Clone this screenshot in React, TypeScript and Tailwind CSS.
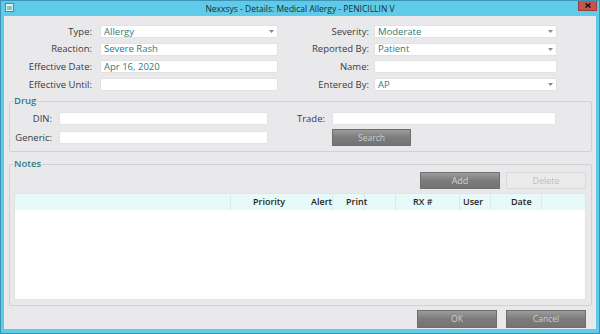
import React from "react";

const font = { fontFamily: '"Open Sans", "Noto Sans", sans-serif' };

function Arrow() {
  return (
    <svg width="5" height="3" viewBox="0 0 5 3" className="shrink-0">
      <path d="M0 0 L5 0 L2.5 3 Z" fill="#8a8a8a" />
    </svg>
  );
}

function Field({ value, dropdown, w }: { value?: string; dropdown?: boolean; w: string }) {
  return (
    <div
      className={`${w} h-[13px] bg-white rounded-[2px] border border-[#e2e2e2] flex items-center pl-[3px] pr-[3px] text-[9.5px] leading-[12px] text-[#2f7b79]`}
    >
      <span className="flex-1 whitespace-nowrap">{value}</span>
      {dropdown && <Arrow />}
    </div>
  );
}

function Label({ children, w }: { children: React.ReactNode; w: string }) {
  return (
    <div className={`${w} shrink-0 text-right text-[9.5px] leading-[12px] whitespace-nowrap text-[#3b3b3b]`}>
      {children}
    </div>
  );
}

function GrayButton({ children, w, h = "h-[17px]" }: { children: React.ReactNode; w: string; h?: string }) {
  return (
    <div
      className={`${w} ${h} flex items-center justify-center border border-[#6e6e6e] bg-gradient-to-b from-[#9c9c9c] via-[#7c7c7c] to-[#747474] text-[8.5px] text-[#cfcfcf] leading-[12px]`}
    >
      <span>{children}</span>
    </div>
  );
}

export default function App() {
  return (
    <div
      className="w-[600px] h-[334px] bg-[#5fcbe9] border border-[#3c95b4] flex flex-col overflow-hidden"
      style={font}
    >
      {/* Title bar */}
      <div className="h-[15px] relative flex items-center justify-center shrink-0">
        <div className="absolute left-[4px] top-[2px] w-[9px] h-[9px] border border-[#3f8f98] bg-[#dff2f2] flex items-center justify-center">
          <div className="w-[5px] h-[4px] bg-[#8fc0c6]" />
        </div>
        <span className="text-[8.5px] text-[#1c2a30] leading-[12px]">
          Nexxsys - Details: Medical Allergy - PENICILLIN V
        </span>
        <div className="absolute right-[2px] top-[-1px] w-[19px] h-[11px] bg-[#c9534c] border border-[#9a3c37] flex items-center justify-center">
          <svg width="6" height="5" viewBox="0 0 6 5">
            <path d="M0.5 0.5 L5.5 4.5 M5.5 0.5 L0.5 4.5" stroke="#111" strokeWidth="1.4" />
          </svg>
        </div>
      </div>

      {/* Content */}
      <div className="flex-1 mx-[3px] mb-[4px] bg-[#e9e9eb] flex flex-col">
        {/* Top form */}
        <div className="flex pt-[9px]">
          <div className="flex flex-col gap-[4.7px]">
            {[
              ["Type:", "Allergy", true],
              ["Reaction:", "Severe Rash", false],
              ["Effective Date:", "Apr 16, 2020", false],
              ["Effective Until:", "", false],
            ].map(([l, v, d]) => (
              <div key={l as string} className="flex items-center gap-[8px]">
                <Label w="w-[88px]">{l as string}</Label>
                <Field w="w-[178px]" value={v as string} dropdown={d as boolean} />
              </div>
            ))}
          </div>
          <div className="flex flex-col gap-[4.7px]">
            {[
              ["Severity:", "Moderate", true],
              ["Reported By:", "Patient", true],
              ["Name:", "", false],
              ["Entered By:", "AP", true],
            ].map(([l, v, d]) => (
              <div key={l as string} className="flex items-center gap-[5px]">
                <Label w="w-[91px]">{l as string}</Label>
                <Field w="w-[183px]" value={v as string} dropdown={d as boolean} />
              </div>
            ))}
          </div>
        </div>

        {/* Drug */}
        <fieldset className="mt-[4px] ml-[5px] w-[583px] border border-[#d2d2d4] rounded-[2px] pb-[5px]">
          <legend className="ml-[3px] px-[1px] text-[9.5px] leading-[12px] font-semibold text-[#2f7d86]">Drug</legend>
          <div className="flex pt-[5px]">
            <div className="flex flex-col gap-[6px]">
              <div className="flex items-center gap-[7px]">
                <Label w="w-[42px]">DIN:</Label>
                <Field w="w-[209px]" />
              </div>
              <div className="flex items-center gap-[7px]">
                <Label w="w-[42px]">Generic:</Label>
                <Field w="w-[209px]" />
              </div>
            </div>
            <div className="flex items-start gap-[7px]">
              <div className="h-[13px] flex items-center">
                <Label w="w-[57px]">Trade:</Label>
              </div>
              <div className="flex flex-col gap-[4px]">
                <Field w="w-[224px]" />
                <GrayButton w="w-[79px]">Search</GrayButton>
              </div>
            </div>
          </div>
        </fieldset>

        {/* Notes */}
        <fieldset className="mt-[6px] ml-[5px] w-[583px] h-[148px] border border-[#d2d2d4] rounded-[2px] flex flex-col">
          <legend className="ml-[3px] px-[1px] text-[9.5px] leading-[12px] font-semibold text-[#2f7d86]">Notes</legend>
          <div className="flex justify-end gap-[6px] pr-[5px] pt-[2px]">
            <GrayButton w="w-[80px]">
              <span className="text-[9px] text-[#d4d4d4]">Add</span>
            </GrayButton>
            <div className="w-[80px] h-[17px] border border-[#dadada] bg-[#ebebec] flex items-center justify-center text-[9px] text-[#bcbcbc] leading-[12px]">
              Delete
            </div>
          </div>
          <div className="mt-[4px] ml-[4px] w-[572px] h-[107px] bg-white border border-[#e3e3e3] flex flex-col">
            <div className="h-[16px] bg-[#e8f9fa] flex items-center text-[9px] font-semibold text-[#262626] leading-[12px] whitespace-nowrap">
              <div className="w-[216px] h-full border-r border-[#d6ecee]" />
              <div className="w-[70px] h-full flex items-center pl-[22px]">Priority</div>
              <div className="w-[32px] h-full flex items-center pl-[10px] border-r border-[#d6ecee]">Alert</div>
              <div className="w-[32px] h-full flex items-center pl-[13px] border-r border-[#d6ecee]">Print</div>
              <div className="w-[31px] h-full border-r border-[#d6ecee]" />
              <div className="w-[64px] h-full flex items-center pl-[17px] border-r border-[#d6ecee]">RX #</div>
              <div className="w-[31px] h-full flex items-center pl-[3px] border-r border-[#d6ecee]">User</div>
              <div className="w-[51px] h-full flex items-center pl-[20px] border-r border-[#d6ecee]">Date</div>
              <div className="flex-1" />
            </div>
          </div>
        </fieldset>

        {/* Bottom buttons */}
        <div className="flex justify-end gap-[9px] pr-[10px] mt-[4px]">
          <GrayButton w="w-[80px]" h="h-[18px]">OK</GrayButton>
          <GrayButton w="w-[80px]" h="h-[18px]">Cancel</GrayButton>
        </div>
      </div>
    </div>
  );
}
